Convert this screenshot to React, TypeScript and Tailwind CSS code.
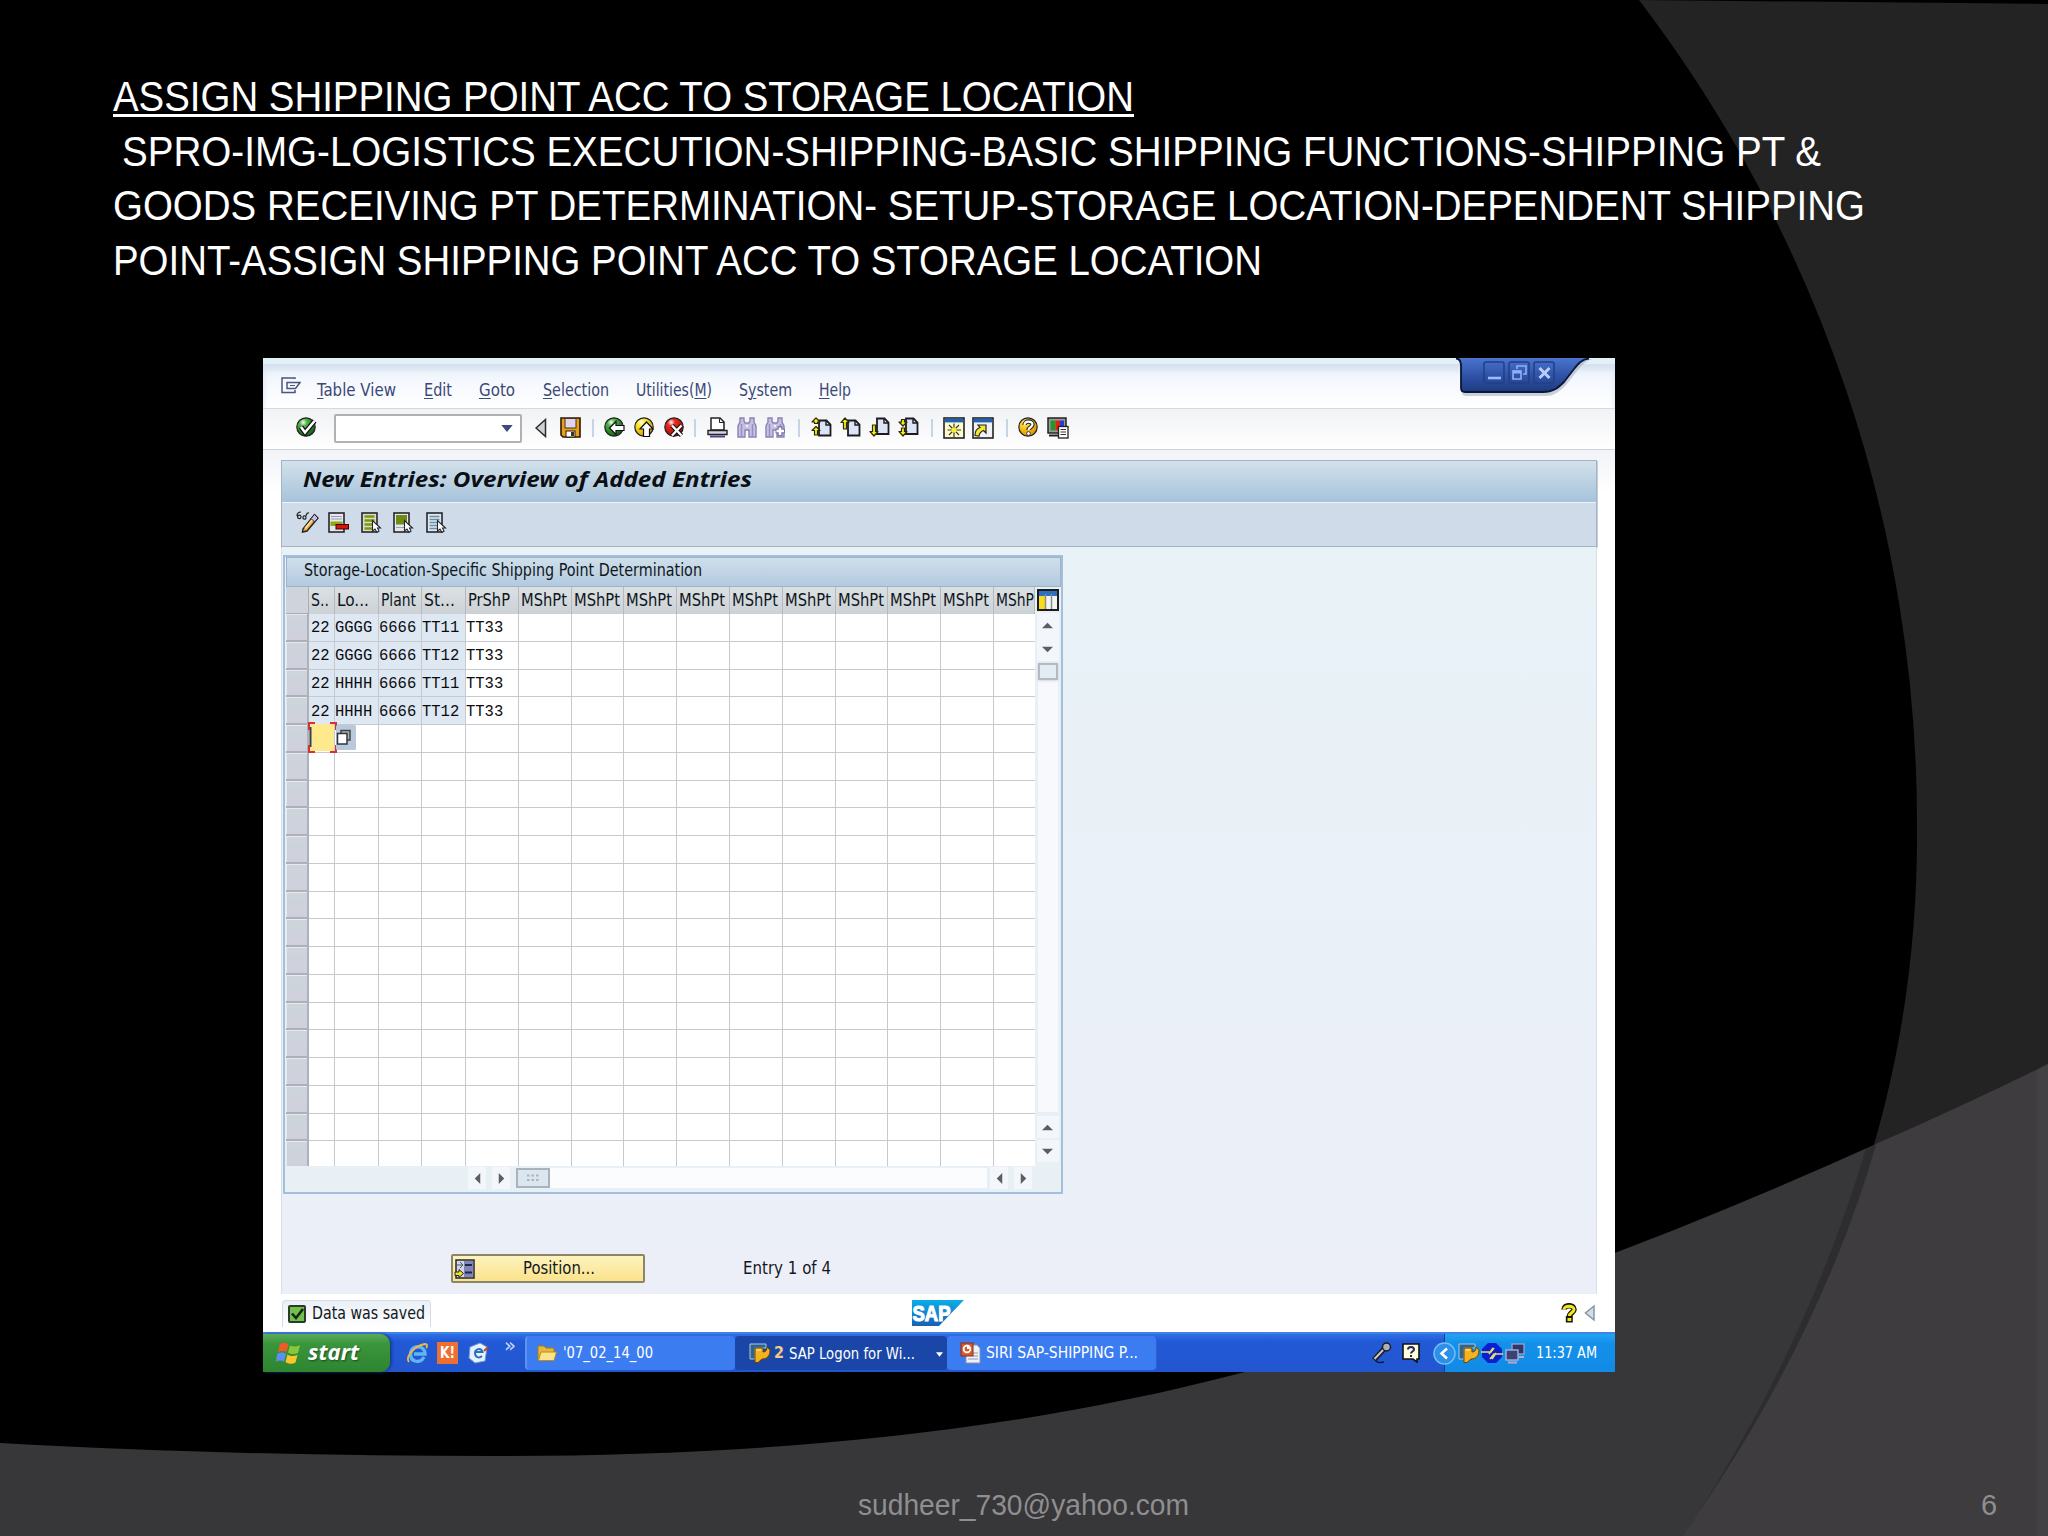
import { useLayoutEffect, useRef, useState } from "react";
import type { ReactNode } from "react";

// Text squeezed or stretched to a fixed width
function Fit({ w, className = "", children }: { w: number; className?: string; children: ReactNode }) {
  const ref = useRef<HTMLSpanElement>(null);
  const [scale, setScale] = useState(1);

  useLayoutEffect(() => {
    if (ref.current) setScale(w / ref.current.getBoundingClientRect().width);
  }, []);

  return (
    <span className="inline-block shrink-0 whitespace-pre" style={{ width: w }}>
      <span
        ref={ref}
        className={`inline-block origin-left ${className}`}
        style={{ transform: `scaleX(${scale})` }}
      >
        {children}
      </span>
    </span>
  );
}

function Icon({ className = "", size = "size-5", box = "0 0 20 20", children }: {
  className?: string;
  size?: string;
  box?: string;
  children: ReactNode;
}) {
  return (
    <svg viewBox={box} className={`block shrink-0 ${size} ${className}`} fill="none">
      {children}
    </svg>
  );
}

function Backdrop() {
  return (
    <svg className="absolute inset-0" width="2048" height="1536" viewBox="0 0 2048 1536">
      <rect width="2048" height="1536" fill="#000" />
      <path d="M1639 0L2048 4V1536H1683C1830 1318 1919 1100 1917 825A1357 1357 0 0 0 1639 0Z" fill="#232324" />
      <path
        d="M0 1443C160 1452 330 1456 496 1456C750 1456 1000 1436 1241 1373C1460 1316 1670 1237 1876 1144C1935 1118 1992 1092 2048 1064V1536H0Z"
        fill="#373638"
      />
      <path d="M1876 1144C1935 1118 1992 1092 2048 1064V1536H1683C1770 1409 1838 1278 1876 1144Z" fill="#3e3c3e" />
      <path d="M1876 1144C1838 1278 1770 1409 1700 1510C1770 1400 1826 1282 1866 1149Z" fill="#2d2c2e" />
      <path d="M2037 1070L2048 1064V1536H2037Z" fill="#434144" />
    </svg>
  );
}

/* ---------- window ---------- */

const menu = [
  { gap: "ml-4", w: 79, key: "T", rest: "able View" },
  { gap: "ml-7", w: 28, key: "E", rest: "dit" },
  { gap: "ml-[27px]", w: 36, key: "G", rest: "oto" },
  { gap: "ml-[28px]", w: 66, key: "S", rest: "election" },
  { gap: "ml-[27px]", w: 76, pre: "Utilities(", key: "M", rest: ")" },
  { gap: "ml-[27px]", w: 53, pre: "S", key: "y", rest: "stem" },
  { gap: "ml-[27px]", w: 32, key: "H", rest: "elp" },
];

function MenuBar() {
  return (
    <div className="flex h-[51px] items-center border-b border-[#d5d9df] bg-linear-to-b from-[#e4f2f8] from-0% via-[#f3f7fd] via-40% to-white pl-[18px] pt-3 text-[17px] text-[#3c4878] shadow-[inset_0_6px_0_#e1f1f7,inset_0_12px_6px_#d6e0ee]">
      <Icon size="h-[17px] w-5" box="0 0 20 17" className="mb-2">
        <path d="M14 2V1H1V15.500H14V13" stroke="#4b557f" strokeWidth="1.500" />
        <path d="M6 5.500H19L14.500 11.500H6Z" stroke="#4b557f" strokeWidth="1.500" />
        <path d="M9 8.500H14" stroke="#4b557f" />
      </Icon>
      {menu.map((m) => (
        <span key={m.rest} className={`mt-0.5 ${m.gap}`}>
          <Fit w={m.w}>
            {m.pre}
            <span className="underline decoration-1 underline-offset-2">{m.key}</span>
            {m.rest}
          </Fit>
        </span>
      ))}
    </div>
  );
}

function WindowControls() {
  return (
    <svg className="absolute top-0 right-[18px]" width="146" height="40" viewBox="0 0 146 40" fill="none">
      <defs>
        <linearGradient id="tab" x1="0" y1="0" x2="0" y2="1">
          <stop stopColor="#4b74cf" />
          <stop offset=".5" stopColor="#3054a8" />
          <stop offset="1" stopColor="#1d3a80" />
        </linearGradient>
      </defs>
      <path d="M5 1C9 1 11 4 11 10V33C11 37 12 38 16 38H94C104 38 109 33 115 27L126 13C132 6 136 2 142 1Z" fill="#9aa3b8" opacity=".5" />
      <path d="M5 0C8 0 10 3 10 8V30C10 33 11 34 14 34H92C102 34 107 30 113 24L123 11C128 4 132 1 138 0Z" fill="url(#tab)" />
      <path d="M5 .5C8 .5 10 3 10 8V30C10 33 11 34 14 34H92C102 34 107 30 113 24L123 11C128 4 132 1 138 .5" stroke="#0b1735" strokeWidth="1.800" />
      <g stroke="#223f88" strokeWidth="1.500">
        <rect x="33" y="4" width="20" height="21" rx="2" />
        <rect x="58" y="4" width="20" height="21" rx="2" />
        <rect x="83" y="4" width="20" height="21" rx="2" />
      </g>
      <path d="M37 20H50" stroke="#9dbcff" strokeWidth="2.600" />
      <path d="M66 11V8H75V16H72M62 13H70V21H62Z" stroke="#8fb0f8" strokeWidth="1.600" />
      <path d="M62 14H70" stroke="#8fb0f8" strokeWidth="3" />
      <path d="M88.500 10L98.500 20M98.500 10L88.500 20" stroke="#b9cdfc" strokeWidth="3" />
    </svg>
  );
}

function Ball({ id, light, dark, children }: { id: string; light: string; dark: string; children: ReactNode }) {
  return (
    <Icon size="size-[21px]" box="0 0 21 21">
      <defs>
        <radialGradient id={id} cx=".35" cy=".25" r=".8">
          <stop stopColor="#fff" />
          <stop offset=".25" stopColor={light} />
          <stop offset="1" stopColor={dark} />
        </radialGradient>
      </defs>
      <circle cx="10" cy="10" r="9.200" fill={`url(#${id})`} stroke="#222" strokeWidth="1.200" />
      {children}
    </Icon>
  );
}

function Separator({ className }: { className: string }) {
  return <div className={`h-[18px] w-0.5 shrink-0 bg-[#c3d5e6] ${className}`} />;
}

function Binoculars({ next }: { next?: boolean }) {
  return (
    <Icon size="size-[21px]" box="0 0 21 21">
      <path d="M3 1H7V4L8 6H12L13 4V1H17V5L19 9V20H12V13H8V20H1V9L3 5Z" fill="#c6c0e2" stroke="#8a83b4" strokeWidth="1.400" />
      <path d="M4.500 7V19M15.500 7V19" stroke="#9890c2" strokeWidth="1.500" />
      <path d="M9 9H11" stroke="#fff" strokeWidth="1.500" />
      {next && <path d="M15 9V19M10.500 14H20" stroke="#7d76ac" strokeWidth="5" />}
      {next && <path d="M15 10.500V18M11.500 14H19" stroke="#fff" strokeWidth="2.400" />}
    </Icon>
  );
}

function PageIcon({ arrows, right }: { arrows: string; right?: boolean }) {
  return (
    <Icon size="size-[21px]" box="0 0 21 21">
      <path
        d={right ? "M8 1.500H15.500L19.500 5.500V17H8Z" : "M8 3.500H15.500L19.500 7.500V18.500H8Z"}
        fill="#dde4f5"
        stroke="#1a1a22"
        strokeWidth="1.800"
      />
      <path d={right ? "M15 2V6H19" : "M15 4V8H19"} stroke="#1a1a22" strokeWidth="1.400" />
      <path d={arrows} fill="#f5ea20" stroke="#2a2800" strokeWidth="1.200" strokeLinejoin="round" />
    </Icon>
  );
}

function Toolbar() {
  return (
    <div className="flex h-[41px] items-center border-b border-[#cdd2da] bg-linear-to-b from-[#f1f2f5] to-white pb-[3px] pl-[33px]">
      <Ball id="ok" light="#4fb544" dark="#0c5a14">
        <path d="M5 10L9 15.500L18.500 4" stroke="#111" strokeWidth="5" />
        <path d="M5 10L9 15.500L18.500 4" stroke="#fff" strokeWidth="2.600" />
      </Ball>
      <div className="mt-0.5 ml-[17px] flex h-[29px] w-[188px] items-center justify-end rounded-xs border-2 border-[#b0b0b5] bg-white pr-[7px]">
        <Icon size="h-[7px] w-[12px]" box="0 0 13 8">
          <path d="M0 0H13L6.500 8Z" fill="#3d4a7d" />
        </Icon>
      </div>
      <Icon size="h-5 w-3" box="0 0 12 20" className="ml-[13px]">
        <path d="M10.500 1.500V18.500L1 10Z" fill="#cfd0d4" stroke="#2b2b2b" strokeWidth="1.500" />
      </Icon>
      <Icon size="size-[21px]" box="0 0 21 21" className="ml-[13px]">
        <path d="M1 1H20V20H3L1 18Z" fill="#e8a01c" stroke="#2a1a00" strokeWidth="1.600" />
        <rect x="5" y="1.500" width="11" height="9.500" fill="#e0d5f0" stroke="#4a3510" />
        <rect x="6" y="14" width="9" height="6" fill="#fff" stroke="#2a1a00" />
        <rect x="11" y="15" width="3" height="4" fill="#333" />
      </Icon>
      <Separator className="ml-[11px]" />
      <div className="ml-[10px] flex gap-[9px]">
        <Ball id="back" light="#4fb544" dark="#0c5a14">
          <path d="M5.500 11L12 4.500V8.500H20V13.500H12V17.500Z" fill="#fff" stroke="#111" strokeWidth="1.200" />
        </Ball>
        <Ball id="exit" light="#ffe92e" dark="#d59c00">
          <path d="M12.500 5L19 12H15.500V19.500H9.500V12H6Z" fill="#fff" stroke="#111" strokeWidth="1.200" />
        </Ball>
        <Ball id="cancel" light="#ee2a20" dark="#a30808">
          <path d="M8 8.500L17.500 18.500M17.500 8.500L8 18.500" stroke="#111" strokeWidth="4.500" />
          <path d="M8 8.500L17.500 18.500M17.500 8.500L8 18.500" stroke="#fff" strokeWidth="2.400" />
        </Ball>
      </div>
      <Separator className="ml-[9px]" />
      <Icon size="size-[21px]" box="0 0 21 21" className="ml-[11px]">
        <path d="M4 1H13L17 5V13H4Z" fill="#fff" stroke="#222" strokeWidth="1.500" />
        <path d="M1 13.500H20V17.500H1Z" fill="#d9d3ea" stroke="#222" strokeWidth="1.400" />
        <path d="M3 19.500H18" stroke="#4b4680" strokeWidth="2" />
        <path d="M12.500 1.500V5.500H17" stroke="#222" />
      </Icon>
      <div className="ml-[9px] flex gap-[7px]">
        <Binoculars />
        <Binoculars next />
      </div>
      <Separator className="ml-3" />
      <div className="ml-[11px] flex gap-2">
        <PageIcon arrows="M5 .8L9 5H6.500V6.500H3.500V5H1ZM5 9.500L9 13.500H6.500V18H3.500V13.500H1Z" />
        <PageIcon arrows="M5 1L9 5.500H6.500V12H3.500V5.500H1Z" />
        <PageIcon right arrows="M5 19L1 14.500H3.500V8H6.500V14.500H9Z" />
        <PageIcon right arrows="M5 9L1 5H3.500V2.500H6.500V5H9ZM5 19L1 14.500H3.500V11H6.500V14.500H9Z" />
      </div>
      <Separator className="ml-3" />
      <div className="ml-2.5 flex gap-[7px]">
        <Icon size="size-[22px]" box="0 0 22 22">
          <rect x="1" y="1" width="20" height="20" fill="#fffbd0" stroke="#222" strokeWidth="1.600" />
          <rect x="1.800" y="1.800" width="18.400" height="3.600" fill="#1c62b8" />
          <path d="M11 6.500V20M4.500 13H18M6 8L16 18M16 8L6 18" stroke="#3c3a10" strokeWidth="1.200" />
          <circle cx="11" cy="13" r="2.600" fill="#fbee2c" />
        </Icon>
        <Icon size="size-[22px]" box="0 0 22 22">
          <rect x="1" y="1" width="20" height="20" fill="#f2f2f6" stroke="#222" strokeWidth="1.600" />
          <rect x="1.800" y="1.800" width="18.400" height="3.600" fill="#1c62b8" />
          <path d="M3 18.500C3 14 5 11.500 8 10.500L6 8H14V16L11.500 13.500C9 14.500 7.500 16 7 19Z" fill="#f6e92a" stroke="#222" strokeWidth="1.200" />
        </Icon>
      </div>
      <Separator className="ml-[12px]" />
      <div className="ml-2.5 flex items-center gap-2">
        <Ball id="help" light="#ffd52a" dark="#e08a00">
          <path d="M6.500 8C6.500 3.500 14.500 3.500 14.500 7.500C14.500 10 10.500 10.500 10.500 13" stroke="#222" strokeWidth="4.400" />
          <path d="M6.500 8C6.500 3.500 14.500 3.500 14.500 7.500C14.500 10 10.500 10.500 10.500 13" stroke="#fff" strokeWidth="2.200" />
          <circle cx="10.500" cy="16.500" r="1.900" fill="#fff" stroke="#222" strokeWidth=".8" />
        </Ball>
        <Icon size="size-[22px]" box="0 0 22 22">
          <rect x="1" y="1" width="18" height="15" fill="#9a9aa0" stroke="#222" strokeWidth="1.500" />
          <rect x="3.500" y="3.500" width="5" height="10" fill="#1f9a22" />
          <rect x="8.500" y="3.500" width="4.500" height="10" fill="#e0201a" />
          <rect x="13" y="3.500" width="4" height="10" fill="#2a38d8" />
          <path d="M2 18.500H11" stroke="#222" strokeWidth="2" />
          <rect x="11.500" y="9.500" width="9.500" height="11.500" fill="#fff" stroke="#222" strokeWidth="1.300" />
          <path d="M13.500 12.500H19M13.500 15H19M13.500 17.500H19" stroke="#333" />
        </Icon>
      </div>
    </div>
  );
}

function Sheet({ fill, children, pointer = true }: { fill: string; children: ReactNode; pointer?: boolean }) {
  return (
    <Icon size="size-[21px]" box="0 0 21 21">
      <rect x="1" y="1" width="15" height="19" fill={fill} stroke="#26262c" strokeWidth="1.600" />
      {children}
      {pointer && <path d="M11.500 8.500V19L14 17L16 20.500L18 19L16.500 16H19.500Z" fill="#fff" stroke="#26262c" strokeWidth="1.100" />}
    </Icon>
  );
}

function TitleArea() {
  return (
    <div className="border border-[#a3b3c5] shadow-[1px_1px_0_#c5cedb]">
      <div className="flex h-[42px] items-center border-b border-[#eaf4fa] bg-linear-to-b from-[#d3e1eb] to-[#a6c3db] pb-1 pl-[21px] font-['Noto_Sans',sans-serif] text-[20.500px] font-bold italic leading-none text-[#0b0f14]">
        <Fit w={449}>New Entries: Overview of Added Entries</Fit>
      </div>
      <div className="flex h-[43px] items-center bg-[#cfdbe8] pb-[5px] pl-3.5">
        <Icon size="h-[22px] w-[23px]" box="0 0 23 22">
          <path d="M7 18L18.500 3.500L22 7L11 20L6.500 21Z" fill="#f2a93a" stroke="#222" strokeWidth="1.400" />
          <path d="M15 7.500L18.500 3.500L22 7L18.500 11Z" fill="#c9bfe2" stroke="#222" />
          <path d="M9 17.500L16 9" stroke="#fde3a8" strokeWidth="1.800" />
          <path d="M1 5C1 2 3 1 5 1M1.500 5.500C2 3.500 5 3.500 5 6C5 8.500 1.500 8 1.500 5.500ZM7 6C7.500 4 10.500 5 10 7C9.500 9 6.500 8.500 7 6ZM10 5C10.500 2 12 1.500 13 2" stroke="#222" strokeWidth="1.200" />
        </Icon>
        <div className="ml-[9px] flex items-center gap-[11.500px]">
          <Sheet fill="#e4e6f0" pointer={false}>
            <path d="M3 4.500H14M3 7H14" stroke="#9a9eb5" />
            <rect x="2.500" y="9.500" width="12" height="4.500" fill="#8ea812" />
            <rect x="8" y="12.500" width="12.500" height="4.500" fill="#d4150e" stroke="#400" />
          </Sheet>
          <Sheet fill="#d8dcc8">
            <path d="M3.500 4.500H13.500M3.500 8.500H13.500M3.500 12.500H11M3.500 16.500H11" stroke="#7c9612" strokeWidth="2.700" />
          </Sheet>
          <Sheet fill="#e4e8ee">
            <rect x="3" y="3" width="11" height="9.500" fill="#6f8c12" />
            <path d="M3 15.500H11" stroke="#9a9eb5" />
          </Sheet>
          <Sheet fill="#dde9f2">
            <path d="M3.500 4.500H13.500M3.500 7.500H13.500M3.500 10.500H11M3.500 13.500H11M3.500 16.500H11" stroke="#6c8ca5" strokeWidth="1.300" />
          </Sheet>
        </div>
      </div>
    </div>
  );
}

/* ---------- table ---------- */

const cols =
  "grid grid-cols-[23px_25.8px_44px_43.700px_43.600px_repeat(10,52.800px)_41px]";

const headers = [
  { text: "S..", w: 18 },
  { text: "Lo...", w: 32 },
  { text: "Plant", w: 35 },
  { text: "St...", w: 31 },
  { text: "PrShP", w: 42 },
  ...Array.from({ length: 9 }, () => ({ text: "MShPt", w: 46 })),
  { text: "MShP", w: 38 },
];

const rows = [
  ["22", "GGGG", "6666", "TT11", "TT33"],
  ["22", "GGGG", "6666", "TT12", "TT33"],
  ["22", "HHHH", "6666", "TT11", "TT33"],
  ["22", "HHHH", "6666", "TT12", "TT33"],
];

function Arrow({ dir, className = "" }: { dir: "up" | "down" | "left" | "right"; className?: string }) {
  const d = {
    up: "M0 9L6 3L12 9Z",
    down: "M0 3H12L6 9Z",
    left: "M9 0V12L3 6Z",
    right: "M3 0L9 6L3 12Z",
  }[dir];
  return (
    <div className={`flex shrink-0 items-center justify-center bg-[#f3f6fa] ${className}`}>
      <Icon size="size-[11px]" box="0 0 12 12">
        <path d={d} fill="#5b5f65" />
      </Icon>
    </div>
  );
}

function Table() {
  return (
    <div className="h-[639px] w-[780px] border-2 border-[#a3bfdc] bg-[#e9f0f5]">
      <div className="ml-px flex h-[30px] items-center border border-[#9fb3c8] bg-linear-to-b from-[#cfdfeb] to-[#b3cadf] pb-[3px] pl-[17px] text-[17px] text-[#10161c]">
        <Fit w={398}>Storage-Location-Specific Shipping Point Determination</Fit>
      </div>
      <div className="ml-px flex">
        <div className="w-[749px] overflow-hidden">
          <div className={`${cols} h-[27px] bg-linear-to-b from-[#dbe1e3] to-[#ccd1d6] text-[17px] text-[#10161c]`}>
            <div className="border-r border-b border-[#a9adb8] bg-[#cfd3dc]" />
            {headers.map((h, i) => (
              <div key={i} className="flex items-center overflow-hidden border-r border-[#b4b9c2] pl-0.5">
                <Fit w={h.w}>{h.text}</Fit>
              </div>
            ))}
          </div>
          <div className="h-[551.5px] overflow-hidden">
            {Array.from({ length: 20 }, (_, r) => (
              <div key={r} className={`${cols} h-[27.75px]`}>
                <div className="border-r-2 border-b-2 border-[#aeb0bb] bg-linear-to-b from-[#cdd5da] to-[#cfd0dc] shadow-[inset_1px_1px_0_#e6e9ee]" />
                {headers.map((_, c) => (
                  <div
                    key={c}
                    className={`relative flex items-center border-r border-b border-[#c6c9cf] pt-0.5 font-['Liberation_Mono',monospace] text-[16px] leading-none text-[#0c0c10] ${
                      r < 4 && c < 4 ? "bg-[#dee8f3]" : "bg-white"
                    } ${c === 14 ? "border-r-0" : ""}`}
                  >
                    {rows[r]?.[c] && (
                      <Fit w={rows[r][c].length * 9.3} className={c === 0 ? "translate-x-0.5" : ""}>
                        {rows[r][c]}
                      </Fit>
                    )}
                    {r === 4 && c === 0 && <FocusCell />}
                  </div>
                ))}
              </div>
            ))}
          </div>
        </div>
        <div className="flex w-[25px] flex-col items-center">
          <Icon size="size-[22px]" box="0 0 22 22" className="mt-0.5">
            <rect x="1" y="1" width="20" height="20" fill="#f4f4f4" stroke="#1c1c20" strokeWidth="2" />
            <rect x="2" y="2" width="18" height="5" fill="#2a6fc0" />
            <rect x="2" y="7" width="6" height="13" fill="#f7dc18" />
            <path d="M8.500 5V20M14.500 5V20" stroke="#8a8c92" strokeWidth="1.500" />
          </Icon>
          <Arrow dir="up" className="mt-0.5 h-6 w-[22px]" />
          <Arrow dir="down" className="h-6 w-[22px]" />
          <div className="mt-0.5 flex h-[449px] w-5 flex-col bg-[#f8f9fc]">
            <div className="h-[17px] border-2 border-[#b3bac3] bg-[#e2ecf3] shadow-sm" />
          </div>
          <Arrow dir="up" className="mt-1 h-[22px] w-[22px]" />
          <Arrow dir="down" className="mt-0.5 h-[22px] w-[22px]" />
        </div>
      </div>
      <div className="flex h-[25px] items-center pl-[183px]">
        <Arrow dir="left" className="h-[22px] w-[18px]" />
        <Arrow dir="right" className="ml-1.5 h-[22px] w-[18px]" />
        <div className="ml-1.5 flex h-5 w-[34px] items-center justify-center border-2 border-[#a9b3be] bg-[#dbe6ef]">
          <Icon size="h-2 w-3" box="0 0 12 8">
            <path d="M0 1.500H12M0 6H12" stroke="#a9b4bf" strokeWidth="2" strokeDasharray="2.500 2" />
          </Icon>
        </div>
        <div className="h-5 w-[437px] bg-[#fbfcfe]" />
        <Arrow dir="left" className="ml-[3px] h-[22px] w-[18px]" />
        <Arrow dir="right" className="ml-1.5 h-[22px] w-[18px]" />
      </div>
    </div>
  );
}

function FocusCell() {
  return (
    <div className="absolute -top-[3px] -left-px z-10 flex items-center">
      <svg width="29" height="31" viewBox="0 0 29 31" fill="none">
        <rect x="1" y="2" width="25" height="27" fill="#fee98c" />
        <path d="M2.500 5V25" stroke="#333a66" strokeWidth="2" />
        <path d="M1 8V1H7M22 1H28V8M28 23V30H22M7 30H1V23" stroke="#d3303a" strokeWidth="2" />
      </svg>
      <svg width="21" height="25" viewBox="0 0 21 25" fill="none" className="-ml-px">
        <rect width="20" height="25" rx="1.500" fill="#b9c9db" />
        <path d="M5 9V5.500H14V15H11" stroke="#40444c" strokeWidth="1.500" fill="#aab4b0" />
        <rect x="1.500" y="8.500" width="9.500" height="10.500" fill="#fff" stroke="#30343c" strokeWidth="1.500" />
      </svg>
    </div>
  );
}

/* ---------- bottom bars ---------- */

function StatusBar() {
  return (
    <div className="flex h-[38px] items-center bg-white pl-[19px]">
      <div className="flex h-[27px] w-[149px] items-center rounded-t-sm border border-b-0 border-[#d5dbe4] bg-linear-to-b from-[#eaf0f6] to-white pl-[5px] text-[17px] text-[#14181c]">
        <Icon size="size-[18px]" box="0 0 18 18">
          <rect x="1" y="1" width="16" height="16" rx="1" fill="#6fc04e" stroke="#2c3a2c" strokeWidth="2" />
          <path d="M4 8.500L8 13L15 4" stroke="#182418" strokeWidth="2.600" />
        </Icon>
        <span className="ml-1.5">
          <Fit w={113}>Data was saved</Fit>
        </span>
      </div>
      <svg width="52" height="26" viewBox="0 0 52 26" className="ml-[481px]">
        <defs>
          <linearGradient id="sap" x1="0" y1="0" x2="0" y2="1">
            <stop stopColor="#0aaee8" />
            <stop offset="1" stopColor="#1a5fb4" />
          </linearGradient>
        </defs>
        <path d="M0 0H52L27 26H0Z" fill="url(#sap)" />
        <text x="0.500" y="21" textLength="38" lengthAdjust="spacingAndGlyphs" fill="#fff" stroke="#fff" strokeWidth="1.200" className="font-['Liberation_Sans',sans-serif] text-[22px] font-bold">
          SAP
        </text>
      </svg>
      <svg width="16" height="20" viewBox="0 0 16 20" className="ml-[597px]" fill="none">
        <path d="M3 6.500C3 1.500 13 1.500 13 6.500C13 9.500 8.500 9.500 8.500 13.500" stroke="#1b1b08" strokeWidth="5.600" />
        <rect x="4.800" y="13" width="7" height="6.500" fill="#1b1b08" />
        <path d="M3 6.500C3 2 13 2 13 6.500C13 9.500 8.500 9.500 8.500 13" stroke="#f4e818" strokeWidth="3" />
        <rect x="6.500" y="15" width="3.800" height="3" fill="#f4e818" />
      </svg>
      <svg width="12" height="18" viewBox="0 0 12 18" className="ml-[7px]" fill="none">
        <path d="M10 2V16L1.500 9Z" fill="#d3dde5" stroke="#8796a4" strokeWidth="1.500" />
      </svg>
    </div>
  );
}

function SapGuiIcon() {
  return (
    <Icon size="size-[22px]" box="0 0 22 22">
      <path d="M1 2H17V6H6V17H1Z" fill="#2f6390" stroke="#a9cbe0" />
      <path d="M6 6H14V10C17 10 18 8 18 5L21 8C21 14 18 17 13 17L9 20.500H6Z" fill="#f5b21e" stroke="#6b4600" />
      <path d="M7.500 8H12" stroke="#fde391" strokeWidth="1.500" />
    </Icon>
  );
}

function Taskbar() {
  return (
    <div className="flex h-10 items-stretch border-t-2 border-[#3f83e8] bg-linear-to-b from-[#2f6fe4] via-[#2259d6] via-20% to-[#2256cf] font-['DejaVu_Sans_Condensed','DejaVu_Sans',sans-serif] text-[15px] leading-none text-white">
      <div className="flex w-[127px] items-center rounded-r-[10px] bg-linear-to-b from-[#5bab58] via-[#3a963c] via-25% to-[#2e8530] pl-3 shadow-[2px_0_3px_#173d8f]">
        <Icon size="h-6 w-[27px]" box="0 0 27 24">
          <path d="M5 3C8 1 11 1.500 13.500 3.500L11.500 11C9 9.500 6 9.500 3 11Z" fill="#ef5a28" />
          <path d="M15 4.500C18 6 21 6 25 4L23 12C19.500 13.500 16 13.500 13 11.500Z" fill="#8cc63c" />
          <path d="M2.500 12.500C5.500 11 8.500 11 11 13L9 20.500C6.500 19 3.500 19 .5 20.500Z" fill="#5b8ff0" />
          <path d="M12.500 13.500C15.500 15.500 19 15.500 22.500 14L20.500 21.500C17 23.500 13.500 23 10.500 21Z" fill="#fbc62a" />
        </Icon>
        <span className="ml-1.5 font-['Open_Sans',sans-serif] text-[22px] font-bold italic [text-shadow:1px_1px_2px_#1b4d1c]">
          <Fit w={51} className="pb-1">start</Fit>
        </span>
      </div>
      <div className="ml-4 flex w-[119px] items-center">
        <Icon size="size-[22px]" box="0 0 22 22">
          <path d="M18 15C16 19 12 20 9 19C3 17 3 7 10 5C15 4 19 7 19 12H8" stroke="#5fb6f7" strokeWidth="3.400" />
          <path d="M3 20C-1 15 8 4 19 2C22 2 21 5 20 6" stroke="#eebb3c" strokeWidth="1.800" />
        </Icon>
        <div className="ml-[9px] flex h-[22px] w-[21px] items-center justify-center bg-[#ee7030] text-[15px] font-bold">
          <Fit w={15}>K!</Fit>
        </div>
        <Icon size="size-[22px]" box="0 0 22 22" className="ml-2.5">
          <path d="M2 5L12 1L19 5L17 19L7 21L1 16Z" fill="#e8f2fc" stroke="#6b9cd0" />
          <path d="M14 14C11 17 7 15 7 11C7 7 13 5 14.500 10H7" stroke="#2b6fc0" strokeWidth="2" />
          <path d="M16 9L20 5" stroke="#c04a30" strokeWidth="2" />
        </Icon>
        <span className="mb-4 ml-3.5 text-[19px] text-[#c6dafb]">
          <Fit w={12}>»</Fit>
        </span>
      </div>
      <div className="my-0.5 flex w-[210px] items-center rounded-sm border-l-2 border-[#5b93f5] bg-[#3b7cf0] pl-2.5">
        <Icon size="h-[18px] w-5" box="0 0 20 18">
          <path d="M1 2H7L9 4H17V16H1Z" fill="#e7b73a" stroke="#a67a14" />
          <path d="M4 8H19.500L17 16.500H1.500Z" fill="#fbe389" stroke="#b98b20" />
        </Icon>
        <span className="ml-1.5">
          <Fit w={90}>'07_02_14_00</Fit>
        </span>
      </div>
      <div className="my-0.5 flex w-[212px] items-center rounded-sm bg-[#1a46a8] pl-3.5">
        <SapGuiIcon />
        <span className="ml-[3px] mt-px font-bold text-[#f3c98a]">
          <Fit w={10}>2</Fit>
        </span>
        <span className="mt-0.5 ml-[5px]">
          <Fit w={126}>SAP Logon for Wi...</Fit>
        </span>
        <Icon size="h-[5px] w-[7px]" box="0 0 8 5" className="mt-0.5 ml-[21px]">
          <path d="M0 0H8L4 5Z" fill="#fff" />
        </Icon>
      </div>
      <div className="my-0.5 flex w-[210px] items-center rounded-sm border-r border-[#2a60cf] bg-[#3b7cf0] pl-[13px]">
        <Icon size="h-[22px] w-[21px]" box="0 0 21 22">
          <path d="M6 3H17L20 6V21H6Z" fill="#eef1f8" stroke="#8a93ac" />
          <path d="M13 11H18M13 14H18M8 17H18" stroke="#8c9cbc" />
          <rect x="1" y="1" width="12" height="13" fill="#d65a30" stroke="#8b2f14" />
          <circle cx="7" cy="7" r="3.400" stroke="#fff" strokeWidth="1.800" />
          <path d="M7 7V2.500L11 7Z" fill="#fff" />
        </Icon>
        <span className="ml-[5px]">
          <Fit w={152}>SIRI SAP-SHIPPING P...</Fit>
        </span>
      </div>
      <div className="ml-[215px] flex w-[72px] items-center">
        <Icon size="h-[22px] w-5" box="0 0 20 22">
          <path d="M2 18L12 7" stroke="#1a1a22" strokeWidth="5" />
          <path d="M2.500 17L12 7" stroke="#c8c8cc" strokeWidth="2" />
          <circle cx="14.500" cy="5" r="4" fill="#aeb0b5" stroke="#1a1a22" strokeWidth="1.500" />
          <path d="M4 19C7 22 9 20 12 20" stroke="#101530" strokeWidth="1.300" />
        </Icon>
        <Icon size="h-5 w-[18px]" box="0 0 18 20" className="ml-2.5">
          <path d="M1 1H17V16H15V19L11 16H1Z" fill="#fffde0" stroke="#111" strokeWidth="1.600" />
          <path d="M6 6.500C6 3 12 3 12 6.500C12 8.500 9 8.500 9 10.500M9 12V14" stroke="#222a55" strokeWidth="2" />
        </Icon>
      </div>
      <div className="flex flex-1 items-center border-l border-[#0c3f96] bg-linear-to-b from-[#22a5f2] via-[#1390ea] via-25% to-[#128ae6]">
        <Icon size="size-[23px]" box="0 0 23 23" className="relative -ml-3">
          <circle cx="11.500" cy="11.500" r="10.500" fill="#2c8fe8" stroke="#73bdf5" strokeWidth="1.500" />
          <path d="M14 6.500L8.500 11.500L14 16.500" stroke="#fff" strokeWidth="2.600" />
        </Icon>
        <span className="ml-0.5">
          <SapGuiIcon />
        </span>
        <Icon size="size-[22px]" box="0 0 22 22" className="ml-px">
          <path d="M7 1H15L21 7V15L15 21H7L1 15V7Z" fill="#0a1fd0" />
          <path d="M0 10H10L13 6M22 12H13L9 17M8 12L12 6M11 17L15 11" stroke="#e8dc6c" strokeWidth="1.600" />
        </Icon>
        <Icon size="h-[21px] w-5" box="0 0 20 21" className="ml-0.5">
          <rect x="7" y="1" width="12" height="10" fill="#30366a" stroke="#9aa3cc" strokeWidth="1.300" />
          <rect x="1" y="7" width="12" height="10" fill="#3b4276" stroke="#b0b8dc" strokeWidth="1.300" />
          <path d="M3 19.500H12M14 14H19" stroke="#b9a9c9" strokeWidth="2" />
        </Icon>
        <span className="ml-[11px]">
          <Fit w={61}>11:37 AM</Fit>
        </span>
      </div>
    </div>
  );
}

function SapWindow() {
  return (
    <div className="relative ml-[263px] h-[1014px] w-[1352px] bg-white font-['DejaVu_Sans_Condensed','DejaVu_Sans',sans-serif] leading-none">
      <MenuBar />
      <WindowControls />
      <Toolbar />
      <div className="h-[844px] bg-linear-to-b from-[#f1f3f8] to-white to-5% px-[18px] pt-2.5">
        <TitleArea />
        <div className="h-[748px] border-x border-b border-[#d9dee8] bg-linear-to-b from-[#e8f2f7] to-[#eceff8] pt-2 pl-px">
          <Table />
          <div className="mt-[60px] ml-[168px] flex items-center text-[17px] text-[#14181c]">
            <div className="flex h-[29px] w-[194px] items-center rounded-xs border-2 border-[#8c8669] bg-linear-to-b from-[#fdf3bd] to-[#fbe38c] pl-px">
              <Icon size="h-5 w-[21px]" box="0 0 21 20">
                <rect x="2" y="1" width="18" height="18" fill="#cfd6ee" stroke="#26262c" strokeWidth="1.500" />
                <rect x="10" y="2" width="9" height="16" fill="#7f86b8" />
                <path d="M11 6H18M11 13.500H18" stroke="#22264a" strokeWidth="1.800" />
                <path d="M3 6H9M6 3L9 6L6 9" stroke="#555" />
                <path d="M1 13H5V10.500L9.500 14.500L5 18.500V16.500H1Z" fill="#f6e41e" stroke="#222" />
              </Icon>
              <span className="ml-12">
                <Fit w={72}>Position...</Fit>
              </span>
            </div>
            <span className="ml-[98px]">
              <Fit w={88}>Entry 1 of 4</Fit>
            </span>
          </div>
        </div>
      </div>
      <StatusBar />
      <Taskbar />
    </div>
  );
}

export default function App() {
  return (
    <div className="relative h-[1536px] w-[2048px] overflow-hidden bg-black">
      <Backdrop />
      <div className="relative flex h-full flex-col">
        <h1 className="flex h-[358px] flex-col pt-[69px] pl-[113px] font-['Liberation_Sans',sans-serif] text-[43px] leading-[54.6px] text-white">
          <Fit w={1021} className="underline decoration-[3px] underline-offset-[3px] [text-decoration-skip-ink:none]">
            ASSIGN SHIPPING POINT ACC TO STORAGE LOCATION
          </Fit>
          <span className="pl-[9px]">
            <Fit w={1699}>SPRO-IMG-LOGISTICS EXECUTION-SHIPPING-BASIC SHIPPING FUNCTIONS-SHIPPING PT &amp;</Fit>
          </span>
          <Fit w={1752}>GOODS RECEIVING PT DETERMINATION- SETUP-STORAGE LOCATION-DEPENDENT SHIPPING</Fit>
          <Fit w={1149}>POINT-ASSIGN SHIPPING POINT ACC TO STORAGE LOCATION</Fit>
        </h1>
        <SapWindow />
        <footer className="mt-[115px] flex items-center pl-[858px] font-['Liberation_Sans',sans-serif] text-[29px] leading-9 text-[#8f8e90]">
          <Fit w={331}>sudheer_730@yahoo.com</Fit>
          <span className="ml-[792px]">6</span>
        </footer>
      </div>
    </div>
  );
}
